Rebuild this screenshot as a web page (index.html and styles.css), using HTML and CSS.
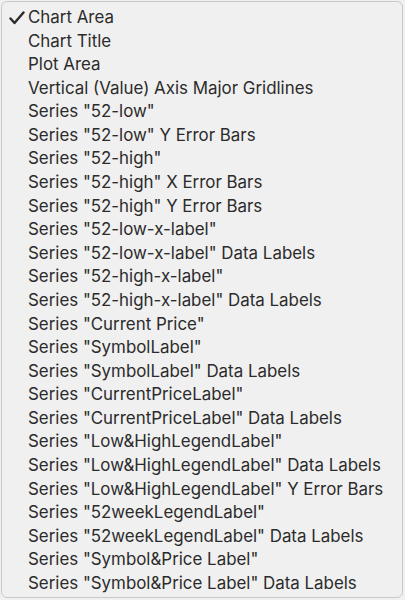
FILE: index.html
```html
<!DOCTYPE html>
<html>

<head>
  <title>Chart Elements</title>
  <link rel="stylesheet" href="styles.css">
</head>

<body>
  <div class="menu">
    <ul class="menu-list">
      <li class="item checked">
        <svg class="check" width="16" height="14" viewBox="0 0 16 14">
          <path d="M1.5 7.5 L5.5 12 L14.5 1.5" fill="none" stroke="#2b2b2b" stroke-width="2.4" stroke-linecap="round" stroke-linejoin="round"/>
        </svg>Chart Area
      </li>
      <li class="item">Chart Title</li>
      <li class="item">Plot Area</li>
      <li class="item">Vertical (Value) Axis Major Gridlines</li>
      <li class="item">Series "52-low"</li>
      <li class="item">Series "52-low" Y Error Bars</li>
      <li class="item">Series "52-high"</li>
      <li class="item">Series "52-high" X Error Bars</li>
      <li class="item">Series "52-high" Y Error Bars</li>
      <li class="item">Series "52-low-x-label"</li>
      <li class="item">Series "52-low-x-label" Data Labels</li>
      <li class="item">Series "52-high-x-label"</li>
      <li class="item">Series "52-high-x-label" Data Labels</li>
      <li class="item">Series "Current Price"</li>
      <li class="item">Series "SymbolLabel"</li>
      <li class="item">Series "SymbolLabel" Data Labels</li>
      <li class="item">Series "CurrentPriceLabel"</li>
      <li class="item">Series "CurrentPriceLabel" Data Labels</li>
      <li class="item">Series "Low&amp;HighLegendLabel"</li>
      <li class="item">Series "Low&amp;HighLegendLabel" Data Labels</li>
      <li class="item">Series "Low&amp;HighLegendLabel" Y Error Bars</li>
      <li class="item">Series "52weekLegendLabel"</li>
      <li class="item">Series "52weekLegendLabel" Data Labels</li>
      <li class="item">Series "Symbol&amp;Price Label"</li>
      <li class="item">Series "Symbol&amp;Price Label" Data Labels</li>
    </ul>
  </div>
</body>

</html>
```

FILE: styles.css
```css
* {
  box-sizing: border-box;
  margin: 0;
  padding: 0;
}

body {
  font-family: Inter, 'Liberation Sans', sans-serif;
  background: #f0f0f0;
  color: #2b2b2b;
  width: 405px;
  height: 600px;
  overflow: hidden;
  padding: 1px 2px 0 1px;
}

.menu {
  height: 597px;
  background: #f0f0f0;
  border: 1px solid #c9c9c9;
  border-radius: 6px;
  padding-top: 4px;
}

.menu-list {
  list-style: none;
}

.item {
  position: relative;
  height: 23.58px;
  line-height: 23.58px;
  padding-left: 26px;
  font-size: 16.9px;
  white-space: nowrap;
}

/* check mark sits in the left gutter */
.check {
  position: absolute;
  left: 7px;
  top: 5px;
}
```
